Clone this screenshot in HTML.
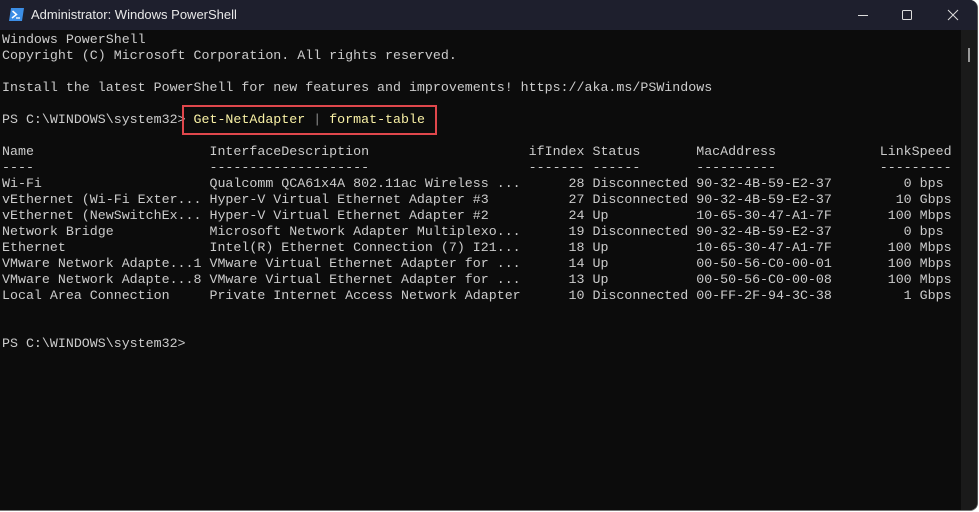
<!DOCTYPE html>
<html><head><style>
html,body{margin:0;padding:0;width:979px;height:512px;overflow:hidden;background:#fff}
.win{position:absolute;left:0;top:0;width:977px;height:510px;background:#0c0c0c;border-radius:0 8px 8px 0;overflow:hidden;border-right:1px solid #555;border-bottom:1px solid #777}
.title{position:absolute;left:0;top:0;width:977px;height:30px;background:#1e1f2d}
.title .t{position:absolute;left:31px;top:7px;font:13px "Liberation Sans",sans-serif;color:#e8e8e8}
.scroll{position:absolute;left:961px;top:30px;width:16px;height:480px;background:#1a1a1a}
.thumb{position:absolute;left:968px;top:48px;width:2px;height:14px;background:#999}
pre{position:absolute;left:2px;top:32px;margin:0;font:13.3px/16px "Liberation Mono",monospace;color:#cccccc}
.y{color:#f9f1a5}.g{color:#8a8a8a}
.box{position:absolute;left:182px;top:105px;width:251px;height:26px;border:2px solid #e0474c}
</style></head><body>
<div class="win">
<div class="title">
<svg style="position:absolute;left:9px;top:8px" width="15" height="13" viewBox="0 0 15 13"><path d="M2 0H15L13 13H0Z" fill="#3c8ee6"/><path d="M3.5 3L7.5 6.5L3 10" stroke="#fff" stroke-width="1.5" fill="none"/><path d="M7 10H11" stroke="#fff" stroke-width="1.3"/></svg>
<span class="t">Administrator: Windows PowerShell</span>
<svg style="position:absolute;left:857px;top:9px" width="110" height="14" viewBox="0 0 110 14"><path d="M1 6.5H11" stroke="#ddd" stroke-width="1"/><rect x="45.5" y="1.5" width="9" height="9" rx="1" stroke="#ddd" fill="none"/><path d="M91 1L101 11M101 1L91 11" stroke="#ddd" stroke-width="1"/></svg>
</div>
<div class="scroll"></div><div class="thumb"></div>
<pre>Windows PowerShell
Copyright (C) Microsoft Corporation. All rights reserved.

Install the latest PowerShell for new features and improvements! https://aka.ms/PSWindows

PS C:\WINDOWS\system32&gt; <span class="y">Get-NetAdapter</span> <span class="g">|</span> <span class="y">format-table</span>

Name                      InterfaceDescription                    ifIndex Status       MacAddress             LinkSpeed
----                      --------------------                    ------- ------       ----------             ---------
Wi-Fi                     Qualcomm QCA61x4A 802.11ac Wireless ...      28 Disconnected 90-32-4B-59-E2-37         0 bps
vEthernet (Wi-Fi Exter... Hyper-V Virtual Ethernet Adapter #3          27 Disconnected 90-32-4B-59-E2-37        10 Gbps
vEthernet (NewSwitchEx... Hyper-V Virtual Ethernet Adapter #2          24 Up           10-65-30-47-A1-7F       100 Mbps
Network Bridge            Microsoft Network Adapter Multiplexo...      19 Disconnected 90-32-4B-59-E2-37         0 bps
Ethernet                  Intel(R) Ethernet Connection (7) I21...      18 Up           10-65-30-47-A1-7F       100 Mbps
VMware Network Adapte...1 VMware Virtual Ethernet Adapter for ...      14 Up           00-50-56-C0-00-01       100 Mbps
VMware Network Adapte...8 VMware Virtual Ethernet Adapter for ...      13 Up           00-50-56-C0-00-08       100 Mbps
Local Area Connection     Private Internet Access Network Adapter      10 Disconnected 00-FF-2F-94-3C-38         1 Gbps


PS C:\WINDOWS\system32&gt;</pre>
<div class="box"></div>
</div>
</body></html>
